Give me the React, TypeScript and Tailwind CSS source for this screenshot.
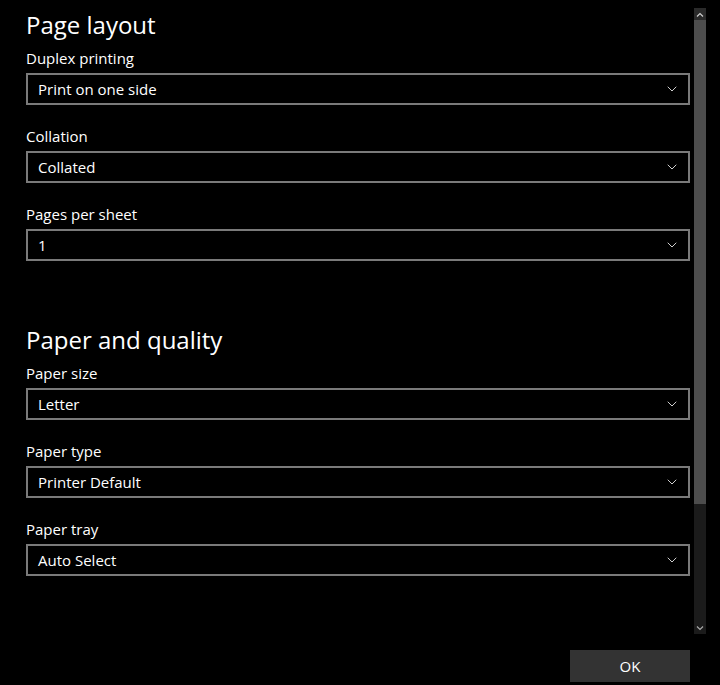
import { ChevronDown } from "lucide-react";

const font = { fontFamily: '"Segoe UI", "Open Sans", "Noto Sans", sans-serif' };

function Field({ label, value }: { label: string; value: string }) {
  return (
    <div className="mt-[7px] first:mt-[7px]">
      <div className="h-5 text-[15px] leading-5 text-white">{label}</div>
      <div className="mt-[5px] flex h-8 w-[664px] items-center justify-between border-2 border-[#7a7a7a] pl-[10px] pr-[8px] text-[15px] text-white">
        <span>{value}</span>
        <ChevronDown className="h-4 w-4 text-[#cfcfcf]" strokeWidth={1.5} />
      </div>
    </div>
  );
}

export default function App() {
  return (
    <div className="relative h-[685px] w-[720px] overflow-hidden bg-black" style={font}>
      <div className="pl-[26px] pt-[9px]">
        <h2 className="h-8 text-[24px] leading-8 text-white">Page layout</h2>
        <Field label="Duplex printing" value="Print on one side" />
        <div className="h-[14px]" />
        <Field label="Collation" value="Collated" />
        <div className="h-[14px]" />
        <Field label="Pages per sheet" value="1" />
        <h2 className="mt-[63px] h-8 text-[24px] leading-8 text-white">Paper and quality</h2>
        <Field label="Paper size" value="Letter" />
        <div className="h-[14px]" />
        <Field label="Paper type" value="Printer Default" />
        <div className="h-[14px]" />
        <Field label="Paper tray" value="Auto Select" />
      </div>

      <div className="absolute left-[694px] top-[8px] flex h-[626px] w-3 flex-col bg-[#1b1b1b]">
        <div className="flex h-3 items-center justify-center bg-[#2a2a2a] text-[#cfcfcf]">
          <svg width="8" height="5" viewBox="0 0 8 5" fill="none" stroke="currentColor" strokeWidth="1.2"><path d="M1 4.5 4 1.5l3 3" /></svg>
        </div>
        <div className="h-[484px] bg-[#4d4d4d]" />
        <div className="flex-1" />
        <div className="flex h-3 items-center justify-center text-[#aaaaaa]">
          <svg width="8" height="5" viewBox="0 0 8 5" fill="none" stroke="currentColor" strokeWidth="1.2"><path d="M1 0.5 4 3.5l3-3" /></svg>
        </div>
      </div>

      <button className="absolute left-[570px] top-[650px] h-8 w-[120px] bg-[#333333] text-[15px] text-white">OK</button>
    </div>
  );
}
